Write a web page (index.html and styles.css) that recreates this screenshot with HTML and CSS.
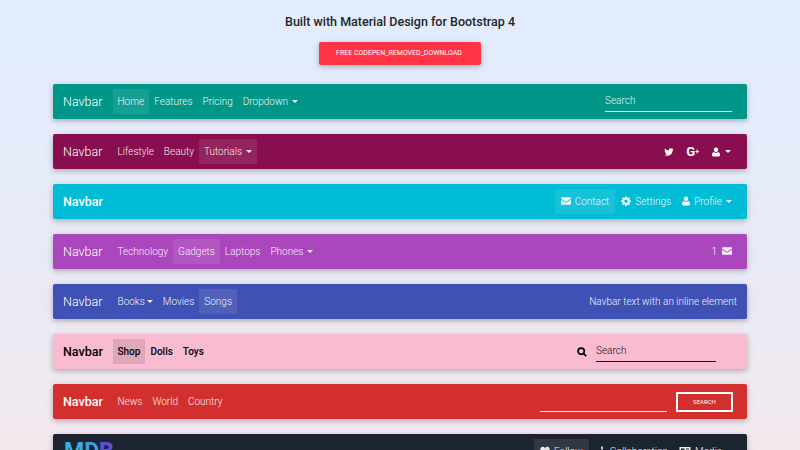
FILE: index.html
```html
<!DOCTYPE html>
<html lang="en">
<head>
<meta charset="utf-8">
<title>Navbars</title>
<link rel="stylesheet" href="styles.css">
</head>
<body>
<main class="page">
  <header class="intro">
    <h1 class="title">Built with Material Design for Bootstrap 4</h1>
    <a class="cta">FREE CODEPEN_REMOVED_DOWNLOAD</a>
  </header>

  <nav class="navbar teal">
    <a class="brand">Navbar</a>
    <ul class="links"><li class="active">Home</li><li>Features</li><li>Pricing</li><li>Dropdown<i class="caret"></i></li></ul>
    <div class="search"><span class="field">Search</span></div>
  </nav>

  <nav class="navbar plum">
    <a class="brand">Navbar</a>
    <ul class="links"><li>Lifestyle</li><li>Beauty</li><li class="active">Tutorials<i class="caret"></i></li></ul>
    <ul class="links end icons">
      <li class="tw"><svg class="ico" viewBox="0 0 24 24"><path d="M23 5.100c-.8.400-1.700.600-2.600.700.900-.600 1.600-1.400 2-2.500-.9.500-1.800.900-2.900 1.100C18.700 3.500 17.500 3 16.200 3c-2.500 0-4.600 2.100-4.600 4.600 0 .400 0 .700.100 1C7.900 8.400 4.500 6.600 2.200 3.800c-.4.700-.6 1.500-.6 2.300 0 1.600.800 3 2 3.800-.8 0-1.500-.2-2.100-.6v.100c0 2.200 1.600 4.100 3.700 4.500-.4.100-.8.200-1.200.200-.3 0-.6 0-.9-.1.600 1.800 2.300 3.200 4.300 3.200-1.600 1.200-3.600 2-5.700 2-.4 0-.7 0-1.100-.1C2.700 20.400 5.100 21 7.700 21c8.500 0 13.100-7 13.100-13.100v-.6c.900-.6 1.700-1.400 2.200-2.200z"/></svg></li>
      <li class="gplus">G<span class="plus">+</span></li>
      <li class="account"><svg class="ico person" viewBox="0 0 20 24"><circle cx="10" cy="6.500" r="5.500"/><path d="M2 23c-1 0-2-.8-2-2 0-4.500 1-8 4.200-8.800C5.700 13.500 7.700 14.300 10 14.300s4.300-.8 5.800-2.100C19 13 20 16.500 20 21c0 1.200-1 2-2 2z"/></svg><i class="caret"></i></li>
    </ul>
  </nav>

  <nav class="navbar cyan">
    <a class="brand strong">Navbar</a>
    <ul class="links end">
      <li class="active wide"><svg class="ico lead" viewBox="0 0 24 20"><path d="M0 4.500V3a2 2 0 0 1 2-2h20a2 2 0 0 1 2 2v1.500L12 12zM0 7l12 7.500L24 7v10a2 2 0 0 1-2 2H2a2 2 0 0 1-2-2z"/></svg>Contact</li>
      <li class="settings"><svg class="ico lead gear" viewBox="0 0 24 24"><path fill-rule="evenodd" d="M10 1h4l.6 3.200 1.700.7L19 3l3 3-1.900 2.700.7 1.700L24 11v3l-3.200.6-.7 1.700L22 19l-3 3-2.700-1.900-1.700.7L14 24h-4l-.6-3.200-1.700-.7L5 22l-3-3 1.900-2.700-.7-1.700L0 14v-3l3.200-.6.7-1.700L2 6l3-3 2.700 1.900 1.700-.7zM12 8.500a4 4 0 1 0 0 8 4 4 0 0 0 0-8z"/></svg>Settings</li>
      <li><svg class="ico lead person" viewBox="0 0 20 24"><circle cx="10" cy="6.500" r="5.500"/><path d="M2 23c-1 0-2-.8-2-2 0-4.500 1-8 4.200-8.800C5.700 13.500 7.700 14.300 10 14.300s4.300-.8 5.800-2.100C19 13 20 16.500 20 21c0 1.200-1 2-2 2z"/></svg>Profile<i class="caret"></i></li>
    </ul>
  </nav>

  <nav class="navbar purple">
    <a class="brand">Navbar</a>
    <ul class="links"><li>Technology</li><li class="active">Gadgets</li><li>Laptops</li><li>Phones<i class="caret"></i></li></ul>
    <ul class="links end"><li>1<svg class="ico trail" viewBox="0 0 24 20"><path d="M0 4.500V3a2 2 0 0 1 2-2h20a2 2 0 0 1 2 2v1.500L12 12zM0 7l12 7.500L24 7v10a2 2 0 0 1-2 2H2a2 2 0 0 1-2-2z"/></svg></li></ul>
  </nav>

  <nav class="navbar indigo">
    <a class="brand">Navbar</a>
    <ul class="links"><li>Books<i class="caret tight"></i></li><li>Movies</li><li class="active">Songs</li></ul>
    <span class="note">Navbar text with an inline element</span>
  </nav>

  <nav class="navbar pink">
    <a class="brand strong">Navbar</a>
    <ul class="links medium"><li class="active">Shop</li><li>Dolls</li><li>Toys</li></ul>
    <div class="search narrow">
      <svg class="ico find" viewBox="0 0 24 24"><path fill="none" stroke="currentColor" stroke-width="4" d="M10 2.500a7.500 7.500 0 1 0 0 15 7.500 7.500 0 0 0 0-15zM15.500 15.500L22 22"/></svg>
      <span class="field">Search</span>
    </div>
  </nav>

  <nav class="navbar red">
    <a class="brand strong">Navbar</a>
    <ul class="links"><li>News</li><li>World</li><li>Country</li></ul>
    <div class="search flush"><span class="field"></span><a class="outline">SEARCH</a></div>
  </nav>

  <nav class="navbar dark">
    <a class="logo">M<span>D</span><b>B</b></a>
    <ul class="links end social">
      <li class="active wide"><svg class="ico lead" viewBox="0 0 24 22"><path d="M12 21C5 15.500 1 12 1 7a5.500 5.500 0 0 1 11-1.500A5.500 5.500 0 0 1 23 7c0 5-4 8.500-11 14z"/></svg>Follow</li>
      <li class="collab"><svg class="ico lead person" viewBox="0 0 20 24"><path d="M7 10h6l1 13H6zM8 1h4v7H8z"/></svg>Collaboration</li>
      <li><svg class="ico lead news" viewBox="0 0 24 20"><path d="M1 2h22v16H1zM4 5v4h7V5zM14 5v2h6V5zM14 9v2h6V9zM4 12v3h16v-3z" fill-rule="evenodd"/></svg>Media</li>
    </ul>
  </nav>
</main>
</body>
</html>
```

FILE: styles.css
```css
* { box-sizing: border-box; }
html, body { height: 100%; }
body {
  margin: 0;
  overflow: hidden;
  font-family: Roboto, "Liberation Sans", sans-serif;
  font-weight: 300;
  font-size: 10px;
  color: #fff;
  background: linear-gradient(180deg, #e2ecfd 0%, #e5ecfb 25%, #e9eaf5 60%, #f3e8ee 100%);
}
.page { width: 694px; margin: 0 auto; display: flex; flex-direction: column; gap: 15px; }
.intro { display: flex; flex-direction: column; align-items: center; height: 69px; padding-top: 14px; }
.title { margin: 0 0 12.500px; font-size: 12.500px; line-height: 15px; font-weight: 500; color: #212529; }
.cta {
  width: 162px; height: 23px; padding-right: 2px; display: flex; align-items: center; justify-content: center;
  background: #ff3547; border-radius: 2px; font-size: 7px; font-weight: 400; color: #fff;
  box-shadow: 0 2px 4px rgba(0,0,0,.16), 0 2px 8px rgba(0,0,0,.12);
}
.navbar {
  height: 35px; flex: none; display: flex; align-items: center; padding: 0 10px;
  border-radius: 2px; box-shadow: 0 2px 4px rgba(0,0,0,.16), 0 2px 8px rgba(0,0,0,.12);
}
.teal { background: #009688; }
.plum { background: #880e4f; }
.cyan { background: #00bcd4; }
.purple { background: #ab47bc; }
.indigo { background: #3f51b5; }
.pink { background: #f8bbd0; color: #000; }
.red { background: #d32f2f; }
.dark { background: #1c2331; }
.brand { font-size: 12.500px; margin-right: 9.500px; width: 40px; white-space: nowrap; padding-bottom: 1px; }
.brand.strong { font-weight: 500; }
.links { list-style: none; margin: 0; padding: 0; display: flex; align-items: center; }
.links li { display: flex; align-items: center; height: 25px; padding: 0 5px 1px; white-space: nowrap; opacity: .92; }
.links li.active { background: rgba(255,255,255,.1); }
.links li.wide { padding-left: 6px; padding-right: 6px; }
.links li.settings { padding-right: 6px; }
.links li.collab { margin-left: 4px; }
.pink .links li { opacity: 1; }
.pink .links li.active { background: rgba(0,0,0,.1); }
.links.medium { font-weight: 500; }
.links.end { margin-left: auto; }
.links.social { margin-right: 10px; }
.caret { display: inline-block; margin-left: 4px; border-top: 3px solid currentColor; border-left: 3px solid transparent; border-right: 3px solid transparent; }
.caret.tight { margin-left: 2px; }
.ico { width: 10px; height: 10px; fill: currentColor; flex: none; }
.ico.lead { margin-right: 4px; }
.ico.trail { margin-left: 5px; }
.ico.person { width: 8px; }
.ico.gear { margin-left: 1px; }
.ico.news { width: 12px; margin-left: 1px; }
.icons li { padding: 0 6px; opacity: 1; }
.icons .tw { padding-right: 6px; }
.icons .gplus { padding-right: 7px; font-weight: 700; font-size: 13px; }
.plus { font-size: 7px; }
.account .caret { margin-left: 5px; }
.search { margin-left: auto; display: flex; align-items: center; padding-right: 5px; }
.search.narrow { padding-right: 21px; }
.search.narrow .field { width: 120px; }
.search.flush { padding-right: 4px; }
.field { width: 127px; height: 23px; margin-bottom: 2px; display: flex; align-items: center; border-bottom: 1px solid currentColor; opacity: .9; }
.find { margin-right: 9px; }
.note { margin-left: auto; opacity: .92; }
.outline { width: 57px; height: 20px; margin-left: 9px; display: flex; align-items: center; justify-content: center; border: 2px solid #fff; border-radius: 1px; font-size: 6px; font-weight: 400; }
.logo { font-size: 23px; font-weight: 700; margin-left: 1px; color: #35aee6; line-height: 35px; }
.logo span { color: #3aa0e0; }
.logo b { color: #5a4fcf; }
```
